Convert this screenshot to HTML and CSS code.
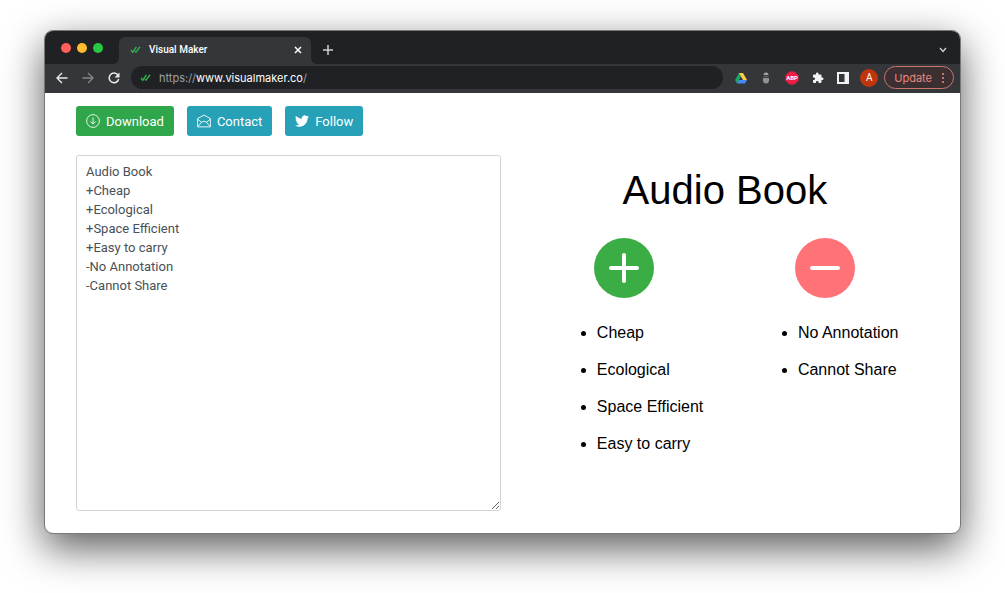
FILE: index.html
```html
<!DOCTYPE html>
<html lang="en">
<head>
    <meta charset="UTF-8">
    <meta name="viewport" content="width=device-width, initial-scale=1.0">
    <title>Visual Maker</title>
    <link rel="stylesheet" href="styles.css">
</head>
<body>
    <div class="window">
        <div class="tab-strip">
            <div class="lights">
                <span class="light red"></span>
                <span class="light yellow"></span>
                <span class="light green"></span>
            </div>
            <div class="tab">
                <svg class="checks" viewBox="0 0 12 10"><path d="M1 5.500l2 2.500 4-6M5.500 7l1 1 4.500-6"/></svg>
                <span class="tab-title">Visual Maker</span>
                <button class="icon-button" aria-label="Close tab">
                    <svg width="8" height="8" viewBox="0 0 8 8"><path d="M1 1l6 6M7 1l-6 6" stroke="#fff" stroke-width="1.500"/></svg>
                </button>
            </div>
            <button class="icon-button new-tab" aria-label="New tab">
                <svg width="10" height="10" viewBox="0 0 10 10"><path d="M5 0v10M0 5h10" stroke="#d0d1d3" stroke-width="1.500"/></svg>
            </button>
            <button class="icon-button tab-search" aria-label="Search tabs">
                <svg width="8" height="6" viewBox="0 0 8 6"><path d="M1 1l3 3.500 3-3.500" fill="none" stroke="#d0d1d3" stroke-width="1.300"/></svg>
            </button>
        </div>

        <div class="toolbar">
            <div class="nav">
                <button class="icon-button" aria-label="Back">
                    <svg width="12" height="12" viewBox="0 0 12 12"><path d="M11.500 6H1.500M6 1L1 6l5 5" fill="none" stroke="#e8eaed" stroke-width="1.400"/></svg>
                </button>
                <button class="icon-button" aria-label="Forward">
                    <svg width="12" height="12" viewBox="0 0 12 12"><path d="M.5 6h10M6 1l5 5-5 5" fill="none" stroke="#85868a" stroke-width="1.300"/></svg>
                </button>
                <button class="icon-button" aria-label="Reload">
                    <svg width="12" height="12" viewBox="0 0 12 12"><path d="M10 3.200A4.800 4.800 0 1 0 10.700 7" fill="none" stroke="#e8eaed" stroke-width="1.500"/><path d="M11.500.5v5h-5z" fill="#e8eaed"/></svg>
                </button>
            </div>
            <div class="address">
                <svg class="checks" viewBox="0 0 12 10"><path d="M1 5.500l2 2.500 4-6M5.500 7l1 1 4.500-6"/></svg>
                <span>https://<span class="host">www.visualmaker.co</span>/</span>
            </div>
            <div class="extensions">
                <svg width="12" height="12" viewBox="0 0 12 12">
                    <path d="M4 1L0 8l2 3.500L6 4.500z" fill="#1da462"/>
                    <path d="M4 1h4l4 7H8z" fill="#ffcf48"/>
                    <path d="M3.800 8H12l-2 3.500H2z" fill="#4688f4"/>
                </svg>
                <svg width="12" height="12" viewBox="0 0 12 12">
                    <path d="M3.500 3a2.500 2.500 0 0 1 5 0z" fill="#a5a5a7"/>
                    <path d="M3.500 4h5v1h-5z" fill="#6c6d70"/>
                    <path d="M3 6h6v2a3 3.500 0 0 1-6 0z" fill="#929294"/>
                </svg>
                <svg width="14" height="14" viewBox="0 0 14 14">
                    <path d="M4.500.5h5l4 4v5l-4 4h-5l-4-4v-5z" fill="#ed1e45"/>
                    <text x="7" y="9" class="abp">ABP</text>
                </svg>
                <svg width="12" height="12" viewBox="0 0 24 24" fill="#f1f3f4"><path d="M20.500 11H19V7a2 2 0 0 0-2-2h-4V3.500a2.500 2.500 0 0 0-5 0V5H4a2 2 0 0 0-2 2v3.800h1.500a2.700 2.700 0 0 1 0 5.400H2V20a2 2 0 0 0 2 2h3.800v-1.500a2.700 2.700 0 0 1 5.400 0V22H17a2 2 0 0 0 2-2v-4h1.500a2.500 2.500 0 0 0 0-5z"/></svg>
                <svg width="12" height="12" viewBox="0 0 12 12"><path d="M0 0h12v12H0zM2 2v8h5.500V2z" fill="#f1f3f4" fill-rule="evenodd"/></svg>
            </div>
            <span class="avatar">A</span>
            <button class="update">
                Update
                <svg width="4" height="12" viewBox="0 0 4 12" fill="#f28b82"><circle cx="2" cy="2" r="1"/><circle cx="2" cy="6" r="1"/><circle cx="2" cy="10" r="1"/></svg>
            </button>
        </div>

        <main class="page">
            <div class="actions">
                <button class="btn btn-success">
                    <svg width="14" height="14" viewBox="0 0 16 16" fill="none" stroke="#fff"><circle cx="8" cy="8" r="7.300"/><path d="M8 4v7.300M5 8.500l3 3 3-3"/></svg>
                    Download
                </button>
                <button class="btn btn-info">
                    <svg width="14" height="14" viewBox="0 0 16 16" fill="none" stroke="#fff"><path d="M.7 5.200L8 1.200l7.300 4v9.500H.7zM.7 6l4.500 3.400M15.300 6l-4.500 3.400M1 14.300l4.200-4.900Q8 7.200 10.800 9.400L15 14.300"/></svg>
                    Contact
                </button>
                <button class="btn btn-info">
                    <svg width="14" height="14" viewBox="0 0 24 24" fill="#fff"><path d="M23.950 4.570a10 10 0 0 1-2.820.77 4.960 4.960 0 0 0 2.160-2.720c-.95.550-2 .950-3.130 1.180a4.920 4.920 0 0 0-8.380 4.480C7.690 8.090 4.070 6.130 1.640 3.160a4.820 4.820 0 0 0-.67 2.480c0 1.710.87 3.210 2.190 4.100a4.900 4.900 0 0 1-2.230-.62v.06a4.920 4.920 0 0 0 3.950 4.830 5 5 0 0 1-2.210.080 4.940 4.940 0 0 0 4.600 3.420A9.870 9.870 0 0 1 0 19.540a13.990 13.990 0 0 0 7.550 2.210c9.050 0 14-7.500 14-13.980 0-.21 0-.42-.02-.63a9.940 9.940 0 0 0 2.460-2.550z"/></svg>
                    Follow
                </button>
            </div>

            <div class="maker">
                <textarea class="source" aria-label="List text" spellcheck="false">Audio Book
+Cheap
+Ecological
+Space Efficient
+Easy to carry
-No Annotation
-Cannot Share</textarea>

                <section class="visual">
                    <h1>Audio Book</h1>
                    <div class="columns">
                        <div class="column">
                            <svg class="sign" viewBox="0 0 60 60"><circle cx="30" cy="30" r="30" fill="#3aad45"/><path d="M17 30h26M30 17v26"/></svg>
                            <ul>
                                <li>Cheap</li>
                                <li>Ecological</li>
                                <li>Space Efficient</li>
                                <li>Easy to carry</li>
                            </ul>
                        </div>
                        <div class="column">
                            <svg class="sign" viewBox="0 0 60 60"><circle cx="30" cy="30" r="30" fill="#ff7378"/><path d="M17 30h26"/></svg>
                            <ul>
                                <li>No Annotation</li>
                                <li>Cannot Share</li>
                            </ul>
                        </div>
                    </div>
                </section>
            </div>
        </main>
    </div>
</body>
</html>
```
FILE: styles.css
```css
* {
    box-sizing: border-box;
}
body {
    display: flex;
    min-height: 100vh;
    margin: 0;
    padding: 30px 44px 59px;
    background: #fff;
    font-family: Roboto, "Liberation Sans", sans-serif;
}
svg {
    display: block;
    flex-shrink: 0;
}
.window {
    flex: 1;
    display: flex;
    flex-direction: column;
    overflow: hidden;
    border: 1px solid #77787a;
    border-radius: 9px;
    background: #fff;
    box-shadow: 0 14px 40px rgba(0, 0, 0, 0.65);
}

/* browser bars */
.icon-button {
    display: flex;
    padding: 0;
    border: 0;
    background: none;
}
.tab-strip {
    display: flex;
    align-items: flex-end;
    height: 33px;
    padding: 0 13px 0 16px;
    background: #202124;
}
.lights {
    display: flex;
    gap: 6px;
    margin-right: 16px;
    padding-bottom: 11px;
}
.light {
    width: 10px;
    height: 10px;
    border-radius: 50%;
}
.red {
    background: #ff5f57;
}
.yellow {
    background: #febc2e;
}
.green {
    background: #28c840;
}
.tab {
    position: relative;
    display: flex;
    align-items: center;
    gap: 8px;
    width: 192px;
    height: 27px;
    padding: 0 9px 2px 11px;
    border-radius: 6px 6px 0 0;
    background: #35363a;
    color: #fff;
    font-size: 10px;
    font-weight: 500;
}
/* rounded feet of the active tab */
.tab::before, .tab::after {
    content: "";
    position: absolute;
    bottom: 0;
    width: 6px;
    height: 6px;
}
.tab::before {
    right: 100%;
    background: radial-gradient(circle at 0 0, #202124 6px, #35363a 6px);
}
.tab::after {
    left: 100%;
    background: radial-gradient(circle at 100% 0, #202124 6px, #35363a 6px);
}
.tab-title {
    flex: 1;
}
.checks {
    width: 11px;
    height: 9px;
    fill: none;
    stroke: #2fae4a;
    stroke-width: 1.6;
}
.new-tab {
    margin-left: 12px;
    padding-bottom: 9px;
}
.tab-search {
    margin-left: auto;
    padding-bottom: 11px;
}
.toolbar {
    display: flex;
    align-items: center;
    height: 29px;
    padding: 0 6px 2px 11px;
    background: #35363a;
}
.nav {
    display: flex;
    gap: 14px;
    margin-right: 11px;
}
.address {
    flex: 1;
    display: flex;
    align-items: center;
    gap: 8px;
    height: 23px;
    padding: 0 9px;
    border-radius: 12px;
    background: #202124;
    color: #9aa0a6;
    font-family: Inter, sans-serif;
    font-size: 11px;
}
.host {
    color: #fff;
}
.extensions {
    display: flex;
    align-items: center;
    gap: 13px;
    margin: 0 11px 0 12px;
}
.abp {
    fill: #fff;
    font-size: 6px;
    font-weight: bold;
    text-anchor: middle;
}
.avatar {
    width: 18px;
    height: 18px;
    margin-right: 6px;
    border-radius: 50%;
    background: #bf360c;
    color: #fff;
    font-size: 10px;
    line-height: 18px;
    text-align: center;
}
.update {
    display: flex;
    align-items: center;
    gap: 9px;
    height: 23px;
    padding: 0 8px 0 9px;
    border: 1px solid #c9766f;
    border-radius: 12px;
    background: #3c2f32;
    color: #e8877f;
    font-family: Inter, sans-serif;
    font-size: 11px;
}

/* page */
.page {
    flex: 1;
    display: flex;
    flex-direction: column;
    gap: 19px;
    padding: 13px 31px 22px;
}
.actions {
    display: flex;
    gap: 13px;
}
.btn {
    display: flex;
    align-items: center;
    gap: 6px;
    height: 30px;
    padding: 0 10px;
    border: 0;
    border-radius: 3px;
    color: #fff;
    font-family: inherit;
    font-size: 13px;
}
.btn-success {
    background: #30a64a;
}
.btn-info {
    background: #26a1b8;
}
.maker {
    flex: 1;
    display: grid;
    grid-template-columns: 51fr 49fr;
    gap: 20px;
}
.source {
    width: 100%;
    height: 100%;
    padding: 6px 9px;
    border: 1px solid #ced4da;
    border-radius: 3px;
    outline: 0;
    color: #495057;
    font-family: inherit;
    font-size: 13px;
    line-height: 19px;
    resize: both;
}
.visual {
    padding: 11px 3px 0;
    color: #000;
    font-family: "Liberation Sans", Arial, sans-serif;
}
.visual h1 {
    margin: 0 0 24px;
    font-size: 40px;
    font-weight: normal;
    line-height: 48px;
    text-align: center;
}
.columns {
    display: grid;
    grid-template-columns: 1fr 1fr;
}
.sign {
    width: 60px;
    height: 60px;
    margin: 0 auto 16px;
    fill: none;
    stroke: #fff;
    stroke-width: 4;
    stroke-linecap: round;
}
.sign circle {
    stroke: none;
}
.column ul {
    margin: 0;
    padding-left: 73px;
    font-size: 16px;
    line-height: 37px;
}
```
